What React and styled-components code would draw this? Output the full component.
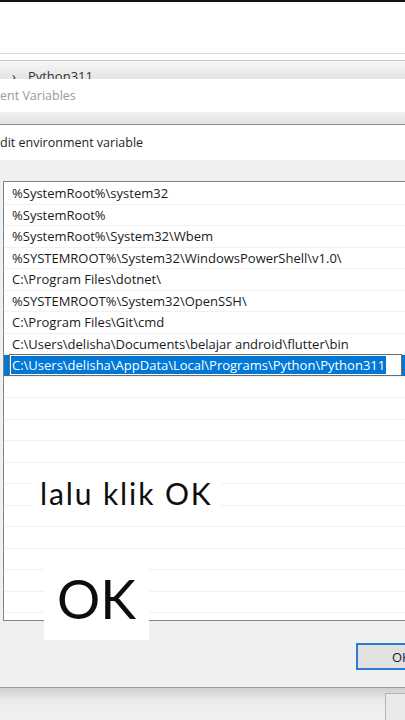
import React from 'react';
import styled, { createGlobalStyle } from 'styled-components';

const GlobalStyle = createGlobalStyle`
  html, body {
    margin: 0;
    padding: 0;
    background: #fff;
  }
  body {
    width: 405px;
    height: 720px;
    overflow: hidden;
    font-family: 'Open Sans', 'Noto Sans', sans-serif;
  }
`;

const paths = [
  '%SystemRoot%\\system32',
  '%SystemRoot%',
  '%SystemRoot%\\System32\\Wbem',
  '%SYSTEMROOT%\\System32\\WindowsPowerShell\\v1.0\\',
  'C:\\Program Files\\dotnet\\',
  '%SYSTEMROOT%\\System32\\OpenSSH\\',
  'C:\\Program Files\\Git\\cmd',
  'C:\\Users\\delisha\\Documents\\belajar android\\flutter\\bin',
];

const editing = 'C:\\Users\\delisha\\AppData\\Local\\Programs\\Python\\Python311';

const Page = styled.div`
  position: relative;
  width: 405px;
  height: 720px;
  display: flex;
  flex-direction: column;
  overflow: hidden;
`;

const TopEdge = styled.div`
  height: 2px;
  background: #111;
`;

const Explorer = styled.div`
  height: 51px;
  background: #fff;
  border-bottom: 1px solid #dadada;
`;

const Gap = styled.div`
  height: 6px;
  background: #fff;
`;

const Breadcrumb = styled.div`
  height: 18px;
  border-top: 1px solid #c9c9c9;
  background: linear-gradient(#f7f7f7, #e4e4e4);
  overflow: hidden;
  display: flex;
  align-items: flex-start;
  padding-left: 12px;
  font-size: 13px;
  color: #333;
  line-height: 13px;

  span {
    margin-top: 9px;
  }

  span + span {
    margin-left: 10px;
    padding: 0 18px 0 2px;
    border-bottom: 1px solid #9a9a9a;
  }
`;

const Title = styled.div`
  height: ${(p) => p.$h}px;
  background: #fff;
  display: flex;
  align-items: center;
  font-size: 12.5px;
  color: ${(p) => p.$color};
  white-space: nowrap;
`;

const Band = styled.div`
  height: 12px;
  background: linear-gradient(#f1f1f1, #e3e3e3);
  border-bottom: 1px solid #8c8c8c;
`;

const Body = styled.div`
  background: #f0f0f0;
  padding: 21px 0 0 3px;
  display: flex;
  flex-direction: column;
  height: 527px;
  box-sizing: border-box;
`;

const ListBox = styled.div`
  width: 420px;
  height: 440px;
  box-sizing: border-box;
  border: 1px solid #838383;
  background: #fff;
  padding-top: 1px;
  overflow: hidden;
`;

const Row = styled.div`
  height: 21.5px;
  box-sizing: border-box;
  border-bottom: 1px solid #f1f1f1;
  display: flex;
  align-items: center;
  padding-left: 8px;
  font-size: 13px;
  color: #1a1a1a;
  white-space: nowrap;
  background: ${(p) => (p.$selected ? '#0078d7' : '#fff')};
`;

const EditBox = styled.div`
  width: 393px;
  height: 22px;
  margin-left: -3px;
  box-sizing: border-box;
  border: 1px solid #6d6d6d;
  background: #fff;
  display: flex;
  align-items: center;
  padding-left: 1px;
`;

const Highlight = styled.span`
  background: #0078d7;
  color: #fff;
  padding: 1px 1px;
  line-height: 16px;
`;

const ButtonRow = styled.div`
  display: flex;
  justify-content: flex-end;
  padding-top: 22px;
`;

const OkButton = styled.div`
  width: 72px;
  height: 27px;
  margin-right: -23px;
  box-sizing: border-box;
  border: 2px solid #2b7cd3;
  background: #e1e1e1;
  font-size: 13px;
  color: #222;
  display: flex;
  align-items: center;
  padding-left: 34px;
`;

const Footer = styled.div`
  flex: 1;
  border-top: 1px solid #9d9d9d;
  background: linear-gradient(#cfcfcf, #ececec 40%, #f2f2f2);
  display: flex;
  justify-content: flex-end;
  padding-top: 5px;
`;

const FooterButton = styled.div`
  width: 30px;
  margin-right: -12px;
  border: 1px solid #b4b4b4;
  border-bottom: none;
  background: #e9e9e9;
`;

const Caption = styled.div`
  position: absolute;
  left: ${(p) => p.$x}px;
  top: ${(p) => p.$y}px;
  background: #fff;
  color: #0d0d0d;
  font-family: 'Lato', 'Open Sans', sans-serif;
  font-size: ${(p) => p.$size}px;
  letter-spacing: ${(p) => p.$track}px;
  line-height: 1;
  padding: ${(p) => p.$pad};
  white-space: nowrap;
`;

export default function App() {
  return (
    <>
      <GlobalStyle />
      <Page>
        <TopEdge />
        <Explorer />
        <Gap />
        <Breadcrumb>
          <span>›</span>
          <span>Python311</span>
        </Breadcrumb>
        <Title $h={33} $color="#9a9a9a">ent Variables</Title>
        <Band />
        <Title $h={35} $color="#1e1e1e">dit environment variable</Title>
        <Body>
          <ListBox>
            {paths.map((p) => (
              <Row key={p}>{p}</Row>
            ))}
            <Row $selected>
              <EditBox>
                <Highlight>{editing}</Highlight>
              </EditBox>
            </Row>
            {[...Array(12).keys()].map((i) => (
              <Row key={`empty-${i}`} />
            ))}
          </ListBox>
          <ButtonRow>
            <OkButton>OK</OkButton>
          </ButtonRow>
        </Body>
        <Footer>
          <FooterButton />
        </Footer>
        <Caption $x={32} $y={472} $size={30} $track={1.9} $pad="6px 8px">lalu klik OK</Caption>
        <Caption $x={44} $y={568} $size={54} $track={0} $pad="4px 13px 14px">OK</Caption>
      </Page>
    </>
  );
}
